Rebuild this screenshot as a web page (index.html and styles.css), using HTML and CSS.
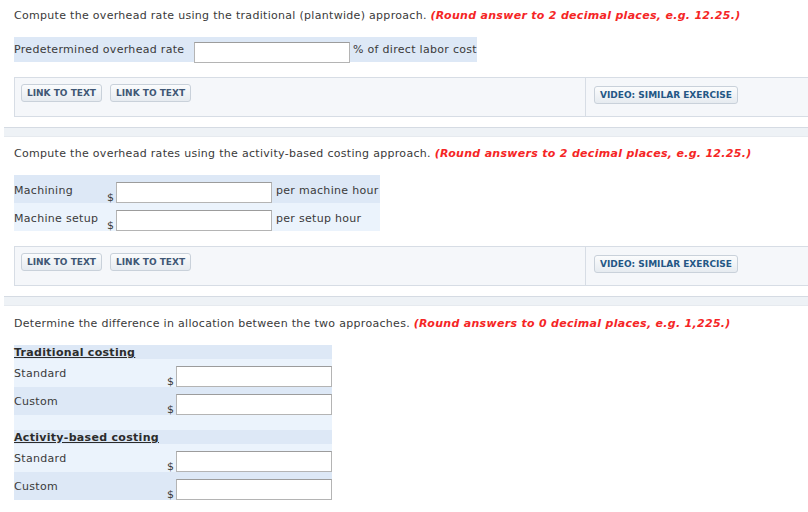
FILE: index.html
```html
<!DOCTYPE html>
<html lang="en">
<head>
    <meta charset="UTF-8">
    <meta name="viewport" content="width=device-width, initial-scale=1.0">
    <title>Overhead Rates</title>
    <link rel="stylesheet" href="styles.css">
</head>
<body>
    <div class="page">
        <!-- Part 1: plantwide rate -->
        <div class="section section-first">
            <p class="prompt">Compute the overhead rate using the traditional (plantwide) approach. <em class="note">(Round answer to 2 decimal places, e.g. 12.25.)</em></p>
            <div class="rate-row">
                <span class="label">Predetermined overhead rate</span>
                <input type="text" class="answer">
                <span class="unit">% of direct labor cost</span>
            </div>
            <div class="links">
                <div class="links-left">
                    <button class="btn">LINK TO TEXT</button>
                    <button class="btn">LINK TO TEXT</button>
                </div>
                <div class="links-right">
                    <button class="btn btn-video">VIDEO: SIMILAR EXERCISE</button>
                </div>
            </div>
        </div>
        <div class="divider"></div>

        <!-- Part 2: activity rates -->
        <div class="section">
            <p class="prompt">Compute the overhead rates using the activity-based costing approach. <em class="note">(Round answers to 2 decimal places, e.g. 12.25.)</em></p>
            <div class="abc-table">
                <div class="abc-row dark">
                    <span class="label">Machining</span>
                    <span class="dollar">$</span>
                    <input type="text" class="answer">
                    <span class="unit">per machine hour</span>
                </div>
                <div class="abc-row light">
                    <span class="label">Machine setup</span>
                    <span class="dollar">$</span>
                    <input type="text" class="answer">
                    <span class="unit">per setup hour</span>
                </div>
            </div>
            <div class="links">
                <div class="links-left">
                    <button class="btn">LINK TO TEXT</button>
                    <button class="btn">LINK TO TEXT</button>
                </div>
                <div class="links-right">
                    <button class="btn btn-video">VIDEO: SIMILAR EXERCISE</button>
                </div>
            </div>
        </div>
        <div class="divider"></div>

        <!-- Part 3: allocation difference -->
        <div class="section section-last">
            <p class="prompt">Determine the difference in allocation between the two approaches. <em class="note">(Round answers to 0 decimal places, e.g. 1,225.)</em></p>
            <div class="alloc-table">
                <div class="alloc-head dark">Traditional costing</div>
                <div class="alloc-row light">
                    <span class="label">Standard</span>
                    <span class="dollar">$</span>
                    <input type="text" class="answer">
                </div>
                <div class="alloc-row dark">
                    <span class="label">Custom</span>
                    <span class="dollar">$</span>
                    <input type="text" class="answer">
                </div>
                <div class="alloc-gap light"></div>
                <div class="alloc-head dark">Activity-based costing</div>
                <div class="alloc-row light">
                    <span class="label">Standard</span>
                    <span class="dollar">$</span>
                    <input type="text" class="answer">
                </div>
                <div class="alloc-row dark">
                    <span class="label">Custom</span>
                    <span class="dollar">$</span>
                    <input type="text" class="answer">
                </div>
            </div>
        </div>
    </div>
</body>
</html>
```

FILE: styles.css
```css
html, body {
    margin: 0;
    padding: 0;
    background: #fff;
    overflow: hidden;
}
body {
    font-family: "DejaVu Sans", Verdana, sans-serif;
    font-size: 11px;
    line-height: 13px;
    letter-spacing: 0.3px;
    color: #3a3a3a;
}
.page {
    width: 808px;
    overflow: hidden;
}
.section {
    padding: 10px 0 10px 14px;
}
.section-first {
    padding-top: 9px;
}
.section-last {
    padding-top: 11px;
}
.prompt {
    margin: 0 0 15px;
}
.note {
    color: #f52525;
    font-weight: bold;
    font-style: italic;
}
.dark {
    background: #dde8f6;
}
.light {
    background: #ebf3fc;
}
.answer {
    box-sizing: border-box;
    width: 156px;
    height: 21px;
    margin: 0;
    padding: 2px 3px;
    border: 1px solid #b4b4b4;
    border-top-color: #9c9c9c;
    background: #fff;
    font-family: inherit;
    font-size: 11px;
}

/* plantwide row */
.rate-row {
    display: flex;
    align-items: flex-start;
    width: 463px;
    height: 25px;
    padding-top: 5px;
    box-sizing: border-box;
    background: #dde8f6;
}
.rate-row .label {
    width: 180px;
    padding-top: 1px;
}
.rate-row .unit {
    padding: 1px 0 0 3px;
}

/* link bar */
.links {
    display: flex;
    height: 40px;
    margin-top: 15px;
    margin-right: -6px;
    box-sizing: border-box;
    border: 1px solid #d7dde5;
    background: #f5f7fa;
}
.links-left {
    display: flex;
    align-items: flex-start;
    gap: 8px;
    width: 571px;
    padding: 6px 0 0 6px;
    box-sizing: border-box;
    border-right: 1px solid #d7dde5;
}
.links-right {
    flex: 1;
    padding: 8px 0 0 8px;
}
.btn {
    height: 18px;
    margin: 0;
    padding: 0 5px;
    border: 1px solid #c9d1da;
    border-radius: 3px;
    background: linear-gradient(#fbfcfd, #e6ebf0);
    font-family: "DejaVu Sans", Verdana, sans-serif;
    font-size: 9px;
    font-weight: bold;
    letter-spacing: 0;
    color: #3f5775;
    cursor: pointer;
}
.btn-video {
    color: #245785;
}

.divider {
    height: 8px;
    margin-left: 4px;
    border-top: 1px solid #d5dbe3;
    border-bottom: 1px solid #e6eaef;
    background: #eef2f6;
}

/* activity rates */
.abc-table {
    width: 366px;
}
.abc-row {
    display: flex;
    align-items: flex-start;
    height: 28px;
    padding-top: 7px;
    box-sizing: border-box;
}
.abc-row .label {
    width: 93px;
    padding-top: 2px;
}
.dollar {
    width: 9px;
    padding-top: 9px;
}
.abc-row .unit {
    padding: 2px 0 0 4px;
}

/* allocation table */
.alloc-table {
    width: 318px;
}
.alloc-head {
    height: 14px;
    font-weight: bold;
    text-decoration: underline;
    color: #2c2c2c;
    padding-top: 1px;
    box-sizing: border-box;
}
.alloc-row {
    display: flex;
    align-items: flex-start;
    height: 28px;
    padding-top: 7px;
    box-sizing: border-box;
}
.alloc-row .label {
    width: 153px;
    padding-top: 1px;
}
.alloc-gap {
    height: 15px;
}
```
